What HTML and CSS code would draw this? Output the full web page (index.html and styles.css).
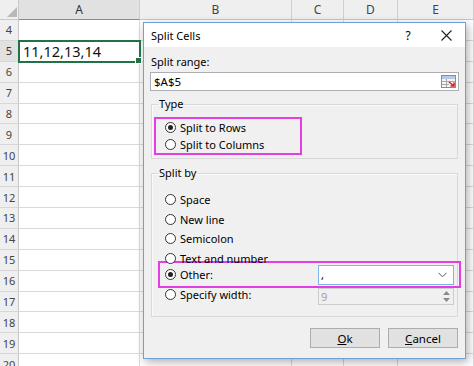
FILE: index.html
```html
<!DOCTYPE html>
<html>
<head>
<meta charset="utf-8">
<link rel="stylesheet" href="styles.css">
</head>
<body>
<div class="sheet">
  <div class="corner"><svg width="19" height="20" viewBox="0 0 19 20"><polygon points="17,7 17,17 7,17" fill="#b9b9b9"/></svg></div>
  <div class="ch sel">A</div><div class="ch">B</div><div class="ch">C</div><div class="ch">D</div><div class="ch">E</div>

  <div class="rh">4</div><div class="c"></div><div class="c"></div><div class="c"></div><div class="c"></div><div class="c"></div>
  <div class="rh sel">5</div><div class="c active">11,12,13,14<span class="handle"></span></div><div class="c"></div><div class="c"></div><div class="c"></div><div class="c"></div>
  <div class="rh">6</div><div class="c"></div><div class="c"></div><div class="c"></div><div class="c"></div><div class="c"></div>
  <div class="rh">7</div><div class="c"></div><div class="c"></div><div class="c"></div><div class="c"></div><div class="c"></div>
  <div class="rh">8</div><div class="c"></div><div class="c"></div><div class="c"></div><div class="c"></div><div class="c"></div>
  <div class="rh">9</div><div class="c"></div><div class="c"></div><div class="c"></div><div class="c"></div><div class="c"></div>
  <div class="rh">10</div><div class="c"></div><div class="c"></div><div class="c"></div><div class="c"></div><div class="c"></div>
  <div class="rh">11</div><div class="c"></div><div class="c"></div><div class="c"></div><div class="c"></div><div class="c"></div>
  <div class="rh">12</div><div class="c"></div><div class="c"></div><div class="c"></div><div class="c"></div><div class="c"></div>
  <div class="rh">13</div><div class="c"></div><div class="c"></div><div class="c"></div><div class="c"></div><div class="c"></div>
  <div class="rh">14</div><div class="c"></div><div class="c"></div><div class="c"></div><div class="c"></div><div class="c"></div>
  <div class="rh">15</div><div class="c"></div><div class="c"></div><div class="c"></div><div class="c"></div><div class="c"></div>
  <div class="rh">16</div><div class="c"></div><div class="c"></div><div class="c"></div><div class="c"></div><div class="c"></div>
  <div class="rh">17</div><div class="c"></div><div class="c"></div><div class="c"></div><div class="c"></div><div class="c"></div>
  <div class="rh">18</div><div class="c"></div><div class="c"></div><div class="c"></div><div class="c"></div><div class="c"></div>
  <div class="rh">19</div><div class="c"></div><div class="c"></div><div class="c"></div><div class="c"></div><div class="c"></div>
  <div class="rh">20</div><div class="c"></div><div class="c"></div><div class="c"></div><div class="c"></div><div class="c"></div>
</div>

<div class="dialog">
  <div class="titlebar">
    <span class="title">Split Cells</span>
    <span class="help">?</span>
    <span class="close"><svg width="11" height="11" viewBox="0 0 11 11"><path d="M0.5 0.5 L10.5 10.5 M10.5 0.5 L0.5 10.5" stroke="#222" stroke-width="1.1" fill="none"/></svg></span>
  </div>
  <div class="body">
    <div class="label">Split range:</div>
    <div class="range">
      <span class="range-val">$A$5</span>
      <svg class="range-icon" width="15" height="13" viewBox="0 0 15 13">
        <rect x="0.5" y="0.5" width="14" height="12" fill="#f4f4f4" stroke="#8d8d8d"/>
        <rect x="1" y="1" width="13" height="3" fill="#b7cbe4"/>
        <path d="M1 6.5 H14 M1 9.5 H8 M5.5 4 V12" stroke="#a8a8a8" stroke-width="1" fill="none"/>
        <path d="M8 7 L13 11 M13 7.5 V11 H9.5" stroke="#d0252a" stroke-width="1.6" fill="none"/>
      </svg>
    </div>

    <fieldset class="group type">
      <legend>Type</legend>
      <div class="hl hl-type">
        <div class="radio-row"><span class="radio on"></span><span>Split to Rows</span></div>
        <div class="radio-row"><span class="radio"></span><span>Split to Columns</span></div>
      </div>
    </fieldset>

    <fieldset class="group splitby">
      <legend>Split by</legend>
      <div class="rows">
        <div class="radio-row r"><span class="radio"></span><span>Space</span></div>
        <div class="radio-row r"><span class="radio"></span><span>New line</span></div>
        <div class="radio-row r"><span class="radio"></span><span>Semicolon</span></div>
        <div class="radio-row r"><span class="radio"></span><span>Text and number</span></div>
      </div>
      <div class="hl hl-other">
        <div class="radio-row grow"><span class="radio on"></span><span>Other:</span></div>
        <div class="combo">
          <span class="combo-val">,</span>
          <svg width="9" height="6" viewBox="0 0 9 6"><path d="M0.5 0.8 L4.5 4.8 L8.5 0.8" stroke="#555" stroke-width="1" fill="none"/></svg>
        </div>
      </div>
      <div class="width-row">
        <div class="radio-row grow tight"><span class="radio"></span><span>Specify width:</span></div>
        <div class="spin">
          <span class="spin-val">9</span>
          <span class="spin-arrows">
            <svg width="7" height="4" viewBox="0 0 7 4"><polygon points="3.5,0 7,4 0,4" fill="#8a8a8a"/></svg>
            <svg width="7" height="4" viewBox="0 0 7 4"><polygon points="0,0 7,0 3.5,4" fill="#8a8a8a"/></svg>
          </span>
        </div>
      </div>
    </fieldset>

    <div class="buttons">
      <div class="btn"><u>O</u>k</div>
      <div class="btn"><u>C</u>ancel</div>
    </div>
  </div>
</div>
</body>
</html>
```

FILE: styles.css
```css
html, body {
  margin: 0;
  padding: 0;
}
body {
  width: 474px;
  height: 366px;
  overflow: hidden;
  position: relative;
  background: #fff;
  font-family: "Noto Sans", "Liberation Sans", sans-serif;
}

/* ---------- spreadsheet ---------- */
.sheet {
  display: grid;
  grid-template-columns: 19px 121px 152px 52px 54px 76px;
  grid-template-rows: 20px repeat(17, 20.9px);
}
.corner {
  background: #efefef;
  border-right: 1px solid #c9c9c9;
  border-bottom: 1px solid #c9c9c9;
  box-sizing: border-box;
  overflow: hidden;
}
.corner svg { display: block; }
.ch {
  background: #efefef;
  border-right: 1px solid #cfcfcf;
  border-bottom: 1px solid #c6c6c6;
  box-sizing: border-box;
  display: flex;
  align-items: center;
  justify-content: center;
  font-size: 12px;
  color: #444;
}
.ch.sel {
  background: #e1e1e1;
  border-bottom: 1px solid #6f9a80;
  color: #333;
}
.rh {
  background: #efefef;
  border-right: 1px solid #c6c6c6;
  border-bottom: 1px solid #d7d7d7;
  box-sizing: border-box;
  display: flex;
  align-items: center;
  justify-content: center;
  font-size: 11px;
  color: #444;
}
.rh.sel {
  background: #e1e1e1;
  color: #333;
}
.c {
  border-right: 1px solid #dadada;
  border-bottom: 1px solid #dadada;
  box-sizing: border-box;
}
.c.active {
  position: relative;
  outline: 2px solid #217346;
  outline-offset: -1px;
  z-index: 1;
  display: flex;
  align-items: center;
  padding-left: 4px;
  font-size: 14.5px;
  color: #111;
}
.handle {
  position: absolute;
  right: -3px;
  bottom: -3px;
  width: 5px;
  height: 5px;
  background: #217346;
  border: 1px solid #fff;
}

/* ---------- dialog ---------- */
.dialog {
  position: absolute;
  left: 143px;
  top: 22px;
  width: 323px;
  height: 337px;
  box-sizing: border-box;
  border: 1px solid #6da2d8;
  background: #f0f0f0;
  box-shadow: 2px 3px 9px rgba(0, 0, 0, 0.32);
  font-size: 11px;
  color: #000;
  display: flex;
  flex-direction: column;
}
.titlebar {
  height: 24px;
  background: #fff;
  display: flex;
  align-items: center;
  padding-left: 7px;
  flex-shrink: 0;
}
.title {
  flex: 1;
  font-size: 11px;
}
.help {
  width: 16px;
  text-align: center;
  font-size: 12px;
  margin-right: 25px;
}
.close {
  display: flex;
  margin-right: 13px;
}
.body {
  padding: 0 6px;
  display: flex;
  flex-direction: column;
}
.label {
  margin-top: 7px;
  line-height: 16px;
  padding-left: 1px;
}
.range {
  margin-top: 2px;
  height: 19px;
  box-sizing: border-box;
  border: 1px solid #abadb3;
  background: #fff;
  display: flex;
  align-items: center;
  padding: 0 2px 0 3px;
}
.range-val {
  flex: 1;
  font-size: 11.5px;
}
.range-icon { display: block; }

.group {
  margin: 6px 1px 0;
  padding: 0;
  border: 1px solid #d9d9d9;
  box-shadow: inset 1px 1px 0 #fafafa;
  min-width: 0;
}
.group legend {
  margin-left: 6px;
  padding: 0 1px;
  line-height: 14px;
}
.hl {
  border: 2px solid #e33ee3;
}
.hl-type {
  margin: 6px 0 3px 2px;
  width: 148px;
  box-sizing: border-box;
  padding-left: 9px;
}
.radio-row {
  display: flex;
  align-items: center;
  gap: 4px;
  height: 17px;
  white-space: nowrap;
}
.radio {
  width: 11px;
  height: 11px;
  box-sizing: border-box;
  border: 1px solid #333;
  border-radius: 50%;
  background: #fff;
  display: flex;
  align-items: center;
  justify-content: center;
  flex-shrink: 0;
}
.radio.on::after {
  content: "";
  width: 5px;
  height: 5px;
  border-radius: 50%;
  background: #222;
}
.splitby {
  margin-top: 7px;
}
.rows {
  padding: 10px 0 0 13px;
}
.radio-row.r {
  height: 19.5px;
}
.hl-other {
  margin: -7px -4px 0 6px;
  height: 27px;
  box-sizing: border-box;
  display: flex;
  align-items: center;
  padding: 0 5px 0 5px;
}
.grow { flex: 1; }
.combo {
  width: 136px;
  height: 20px;
  box-sizing: border-box;
  border: 1px solid #7eb4ea;
  background: #fff;
  display: flex;
  align-items: center;
  justify-content: space-between;
  padding: 0 6px 0 2px;
}
.combo-val { font-size: 11px; }
.combo svg { display: block; }
.width-row {
  display: flex;
  align-items: flex-start;
  padding: 0 3px 11px 13px;
}
.radio-row.tight {
  height: 12px;
}
.spin {
  width: 136px;
  height: 17px;
  box-sizing: border-box;
  border: 1px solid #cccccc;
  background: #f0f0f0;
  display: flex;
  align-items: center;
  justify-content: space-between;
  padding: 0 1px 0 2px;
}
.spin-val {
  color: #a0a0a0;
  font-size: 11px;
}
.spin-arrows {
  display: flex;
  flex-direction: column;
  gap: 3px;
  width: 11px;
  align-items: center;
}
.spin-arrows svg { display: block; }

.buttons {
  margin-top: 11px;
  display: flex;
  justify-content: flex-end;
  gap: 8px;
  padding-right: 1px;
}
.btn {
  width: 70px;
  height: 20px;
  box-sizing: border-box;
  border: 1px solid #adadad;
  background: #e1e1e1;
  display: flex;
  align-items: center;
  justify-content: center;
  font-size: 11.5px;
}
```
